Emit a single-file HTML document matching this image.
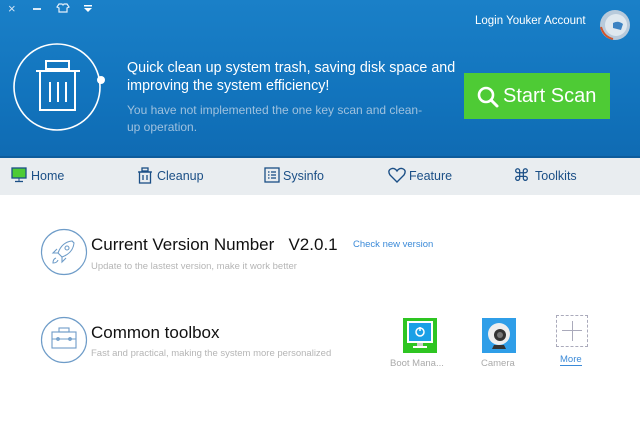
<!DOCTYPE html>
<html><head><style>
*{margin:0;padding:0;box-sizing:border-box}
body{width:640px;height:427px;overflow:hidden;background:#fff;font-family:"Liberation Sans",sans-serif;position:relative}
.hdr{position:absolute;left:0;top:0;width:640px;height:158px;background:linear-gradient(180deg,#1a80c8 0%,#1274bd 60%,#0f6bb3 100%);border-bottom:2px solid #0d5c9c}
.abs{position:absolute;white-space:nowrap}
.nav{position:absolute;top:158px;left:0;width:640px;height:37px;background:#e9edf0}
.nav span{position:absolute;top:11px;font-size:12.5px;color:#1b4f86}
.nav svg{position:absolute;top:9px}
</style></head><body>
<div class="hdr">
 <div class="abs" style="left:8px;top:1px;color:#cfe3f5;font-size:13px">×</div>
 <div class="abs" style="left:33px;top:8px;width:8px;height:1.5px;background:#d9eaf7"></div>
 <svg class="abs" style="left:56px;top:3px" width="14" height="10"><path d="M3 1 L1 4 L3 5 L3 9 L11 9 L11 5 L13 4 L11 1 L8 1 Q7 3 6 1Z" fill="none" stroke="#e5f0fa" stroke-width="1.2"/></svg>
 <svg class="abs" style="left:83px;top:5px" width="10" height="8"><rect x="1" y="0" width="8" height="1.5" fill="#fff"/><path d="M1 3 L9 3 L5 7Z" fill="#fff"/></svg>
 <svg class="abs" style="left:12px;top:42px" width="96" height="96"><circle cx="45" cy="45" r="43" fill="none" stroke="#fff" stroke-width="1.6"/><circle cx="89" cy="38" r="4" fill="#fff"/>
 <g fill="none" stroke="#fff" stroke-width="2"><rect x="34" y="19" width="23" height="8"/><line x1="24" y1="29" x2="68" y2="29"/><rect x="28" y="29" width="35" height="39"/><line x1="38" y1="40" x2="38" y2="60"/><line x1="46" y1="40" x2="46" y2="60"/><line x1="54" y1="40" x2="54" y2="60"/></g></svg>
 <div class="abs" style="left:127px;top:59px;color:#fff;font-size:14.3px;line-height:18px">Quick clean up system trash, saving disk space and<br>improving the system efficiency!</div>
 <div class="abs" style="left:127px;top:102px;color:#9fc1de;font-size:12px;line-height:17px">You have not implemented the one key scan and clean-<br>up operation.</div>
 <div class="abs" style="left:475px;top:15px;color:#fff;font-size:11.5px">Login Youker Account</div>
 <svg class="abs" style="left:599px;top:9px" width="32" height="32"><circle cx="16" cy="16" r="15" fill="#b8cadb"/><circle cx="17" cy="16" r="11" fill="#dfe8ef"/><path d="M14 14 Q19 11 24 15 L22 21 L14 19Z" fill="#3d83c2"/><path d="M2 18 Q5 28 14 30" stroke="#d2542a" stroke-width="2" fill="none"/></svg>
 <div class="abs" style="left:464px;top:73px;width:146px;height:46px;background:#4ecb35;color:#fff;font-size:20px;line-height:46px;padding-left:39px">Start Scan</div>
 <svg class="abs" style="left:476px;top:85px" width="24" height="24"><circle cx="10" cy="10" r="7" fill="none" stroke="#fff" stroke-width="2.6"/><line x1="15" y1="15" x2="21" y2="21" stroke="#fff" stroke-width="3" stroke-linecap="round"/></svg>
</div>
<div class="nav">
 <svg style="left:11px" width="16" height="16"><rect x="1" y="1" width="14" height="10" fill="#4ecb35" stroke="#1b4f86" stroke-width="1.3"/><line x1="8" y1="11" x2="8" y2="14" stroke="#1b4f86"/><line x1="4" y1="14.5" x2="12" y2="14.5" stroke="#1b4f86" stroke-width="1.3"/></svg><span style="left:31px">Home</span>
 <svg style="left:137px" width="16" height="18"><g fill="none" stroke="#1b4f86" stroke-width="1.3"><rect x="5" y="1" width="6" height="3"/><line x1="1" y1="5" x2="15" y2="5"/><rect x="2.5" y="5" width="11" height="11"/><line x1="6" y1="8" x2="6" y2="13"/><line x1="10" y1="8" x2="10" y2="13"/></g></svg><span style="left:157px">Cleanup</span>
 <svg style="left:264px" width="16" height="16"><g fill="none" stroke="#1b4f86" stroke-width="1.3"><rect x="1" y="1" width="14" height="14"/><line x1="4" y1="5" x2="5.5" y2="5"/><line x1="7" y1="5" x2="12" y2="5"/><line x1="4" y1="8" x2="5.5" y2="8"/><line x1="7" y1="8" x2="12" y2="8"/><line x1="4" y1="11" x2="5.5" y2="11"/><line x1="7" y1="11" x2="12" y2="11"/></g></svg><span style="left:283px">Sysinfo</span>
 <svg style="left:388px" width="18" height="17"><path d="M9 15 L2 8 Q-1 3 4 1.5 Q7 1 9 4 Q11 1 14 1.5 Q19 3 16 8Z" fill="none" stroke="#1b4f86" stroke-width="1.4"/></svg><span style="left:409px">Feature</span>
 <span style="left:513px;top:8px;font-size:17px">⌘</span><span style="left:535px">Toolkits</span>
</div>
<svg class="abs" style="left:40px;top:228px" width="48" height="48"><circle cx="24" cy="24" r="22.5" fill="none" stroke="#6e9cc8" stroke-width="1.2"/><g fill="none" stroke="#6e9cc8" stroke-width="1.1"><path d="M32 13 Q22 14 18 25 L22 29 Q33 25 34 15Z"/><circle cx="27" cy="20" r="2"/><path d="M18 25 L13 25 L17 21"/><path d="M22 29 L22 34 L26 30"/><path d="M16 30 Q13 31 13 35 Q17 35 18 32"/></g></svg>
<div class="abs" style="left:91px;top:235px;font-size:17px;color:#111">Current Version Number&nbsp;&nbsp;&nbsp;V2.0.1</div>
<div class="abs" style="left:353px;top:239px;font-size:9.5px;color:#3b8ad8">Check new version</div>
<div class="abs" style="left:91px;top:261px;font-size:9.5px;color:#b5b5b5">Update to the lastest version, make it work better</div>
<svg class="abs" style="left:40px;top:316px" width="48" height="48"><circle cx="24" cy="24" r="22.5" fill="none" stroke="#6e9cc8" stroke-width="1.2"/><g fill="none" stroke="#6e9cc8" stroke-width="1.1"><rect x="12" y="16" width="24" height="16"/><rect x="19" y="12" width="10" height="4"/><line x1="12" y1="23" x2="36" y2="23"/><circle cx="18" cy="23" r="1.3"/><circle cx="30" cy="23" r="1.3"/></g></svg>
<div class="abs" style="left:91px;top:323px;font-size:17px;color:#111">Common toolbox</div>
<div class="abs" style="left:91px;top:348px;font-size:9.5px;color:#b5b5b5">Fast and practical, making the system more personalized</div>
<svg class="abs" style="left:403px;top:318px" width="34" height="35"><rect width="34" height="35" fill="#2ec522"/><rect x="5" y="4" width="24" height="20" fill="#1aa0e6" stroke="#fff" stroke-width="2"/><rect x="14" y="25" width="6" height="3" fill="#ccc"/><rect x="10" y="28" width="14" height="2" fill="#fff"/><circle cx="17" cy="14" r="4" fill="none" stroke="#fff" stroke-width="1.5"/><line x1="17" y1="9" x2="17" y2="13" stroke="#fff" stroke-width="1.5"/></svg>
<div class="abs" style="left:390px;top:358px;font-size:9.5px;color:#aaa">Boot Mana...</div>
<svg class="abs" style="left:482px;top:318px" width="34" height="35"><rect width="34" height="35" fill="#2f9ee8"/><circle cx="17" cy="16" r="11" fill="#eee"/><circle cx="18" cy="17" r="6" fill="#333"/><circle cx="18" cy="17" r="3" fill="#777"/><path d="M10 31 L24 31 L22 27 L12 27Z" fill="#333"/></svg>
<div class="abs" style="left:481px;top:358px;font-size:9.5px;color:#aaa">Camera</div>
<div class="abs" style="left:556px;top:315px;width:32px;height:32px;border:1px dashed #aab"></div>
<div class="abs" style="left:562px;top:330px;width:20px;height:1px;background:#aab"></div>
<div class="abs" style="left:572px;top:321px;width:1px;height:20px;background:#aab"></div>
<div class="abs" style="left:560px;top:354px;font-size:9.5px;color:#3b8ad8;border-bottom:1px solid #3b8ad8">More</div>
</body></html>
